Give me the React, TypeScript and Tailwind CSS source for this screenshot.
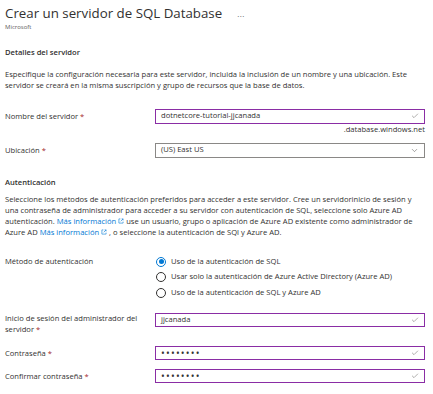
import { Check, ChevronDown } from "lucide-react";

const font = { fontFamily: '"Open Sans", "Noto Sans", sans-serif' };

function Req() {
  return <span className="text-[#a4262c]"> *</span>;
}

function Ext() {
  return (
    <svg viewBox="0 0 10 10" className="inline-block w-[6px] h-[6px] ml-[2px] align-baseline" fill="none" stroke="#0078d4" strokeWidth="1">
      <path d="M4 1.5H1.5v7h7V6" />
      <path d="M6 1.5h2.5V4M8.5 1.5 4.5 5.5" />
    </svg>
  );
}

function Field({
  value,
  purple = true,
  select = false,
  pw = false,
  tall = false,
}: {
  value: string;
  purple?: boolean;
  select?: boolean;
  pw?: boolean;
  tall?: boolean;
}) {
  return (
    <div
      className={`flex items-center justify-between px-[5px] bg-white ${tall ? "h-[15px]" : "h-[14px]"} ${
        purple ? "border border-[#8a2da5]" : "border border-[#8a8886]"
      }`}
    >
      <span className={pw ? "text-[#323130] text-[10px] tracking-[1.2px] leading-none" : "text-[#323130] leading-none"}>{value}</span>
      {select ? (
        <ChevronDown className="w-[9px] h-[9px] text-[#605e5c]" strokeWidth={1.5} />
      ) : (
        <Check className="w-[8px] h-[8px] text-[#605e5c]" strokeWidth={1.5} />
      )}
    </div>
  );
}

function Radio({ checked, label }: { checked?: boolean; label: string }) {
  return (
    <div className="flex items-center h-[15.5px]">
      <span
        className={`w-[10px] h-[10px] rounded-full flex items-center justify-center mr-[5px] ${
          checked ? "border border-[#0078d4]" : "border border-[#323130]"
        }`}
      >
        {checked && <span className="w-[5px] h-[5px] rounded-full bg-[#0078d4]" />}
      </span>
      <span className="leading-none">{label}</span>
    </div>
  );
}

export default function App() {
  return (
    <div style={font} className="w-[433px] h-[394px] bg-white text-[#323130] text-[7.6px] leading-[11px] pl-[5px] pr-[8px] overflow-hidden">
      <div className="flex items-center pt-[3px]">
        <h1 className="text-[13.3px] leading-[20px] font-normal text-[#323130]">Crear un servidor de SQL Database</h1>
        <span className="ml-[15px] text-[#605e5c] text-[8px] tracking-[0.5px]">...</span>
      </div>
      <div className="text-[6px] leading-[8px] text-[#605e5c]">Microsoft</div>

      <div className="mt-[16px] font-semibold">Detalles del servidor</div>
      <p className="mt-[11px]">
        Especifique la configuración necesaria para este servidor, incluida la inclusión de un nombre y una ubicación. Este servidor se creará en la misma suscripción y grupo de recursos que la base de datos.
      </p>

      <div className="flex items-center mt-[17.5px]">
        <div className="w-[150px]">
          Nombre del servidor<Req />
        </div>
        <div className="flex-1">
          <Field value="dotnetcore-tutorial-jjcanada" tall />
        </div>
      </div>
      <div className="text-right leading-[10px]">.database.windows.net</div>

      <div className="flex items-center mt-[9px]">
        <div className="w-[150px]">
          Ubicación<Req />
        </div>
        <div className="flex-1">
          <Field value="(US) East US" purple={false} select tall />
        </div>
      </div>

      <div className="mt-[19.5px] font-semibold">Autenticación</div>
      <p className="mt-[6px]">
        Seleccione los métodos de autenticación preferidos para acceder a este servidor. Cree un servidorinicio de sesión y una contraseña de administrador para acceder a su servidor con autenticación de SQL, seleccione solo Azure AD autenticación. <a className="text-[#0078d4]">Más información<Ext /></a> use un usuario, grupo o aplicación de Azure AD existente como administrador de Azure AD <a className="text-[#0078d4]">Más información<Ext /></a> , o seleccione la autenticación de SQl y Azure AD.
      </p>

      <div className="flex mt-[15.75px]">
        <div className="w-[150px] pt-[2.5px]">Método de autenticación</div>
        <div className="flex-1 pl-[1px]">
          <Radio checked label="Uso de la autenticación de SQL" />
          <Radio label="Usar solo la autenticación de Azure Active Directory (Azure AD)" />
          <Radio label="Uso de la autenticación de SQL y Azure AD" />
        </div>
      </div>

      <div className="flex items-start mt-[12.25px]">
        <div className="w-[150px] leading-[10.5px] pt-[0.5px]">
          Inicio de sesión del administrador del servidor<Req />
        </div>
        <div className="flex-1">
          <Field value="jjcanada" />
        </div>
      </div>

      <div className="flex items-center mt-[12px]">
        <div className="w-[150px]">
          Contraseña<Req />
        </div>
        <div className="flex-1">
          <Field value="••••••••" pw />
        </div>
      </div>

      <div className="flex items-center mt-[9px]">
        <div className="w-[150px]">
          Confirmar contraseña<Req />
        </div>
        <div className="flex-1">
          <Field value="••••••••" pw />
        </div>
      </div>
    </div>
  );
}
